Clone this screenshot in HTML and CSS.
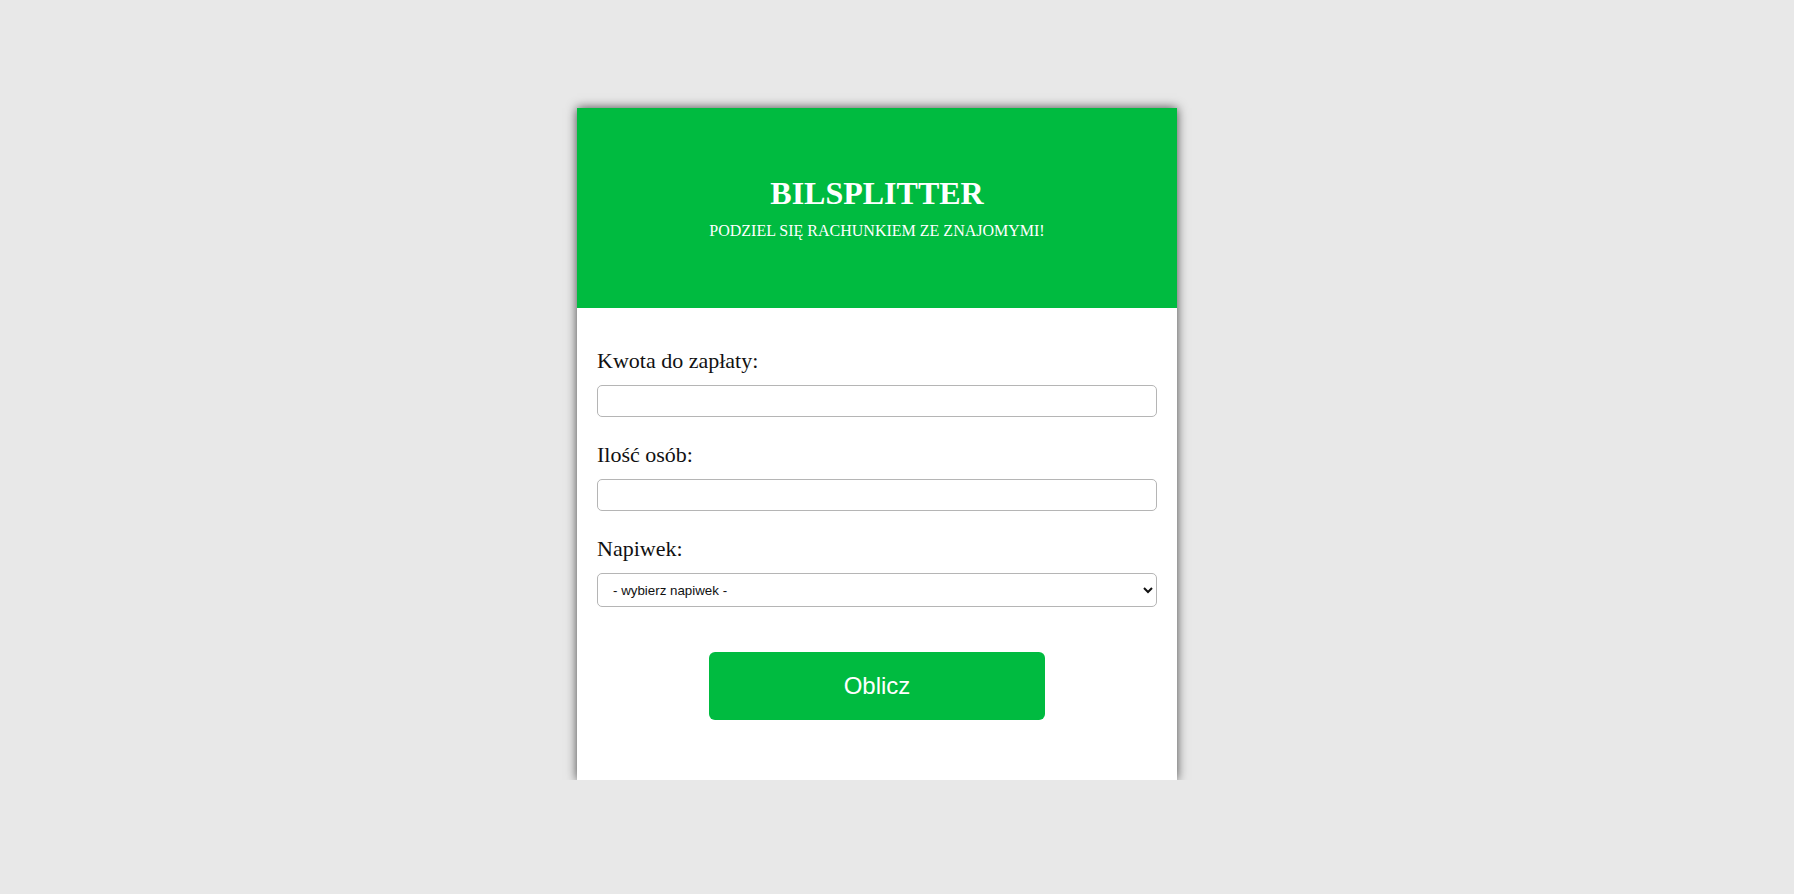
FILE: index.html
```html
<!DOCTYPE html>
<html lang="pl">
<head>
<meta charset="utf-8">
<title>Bilsplitter</title>
<link rel="stylesheet" href="styles.css">
</head>
<body>
<div class="page">
  <div class="card">
    <header class="card-header">
      <h1 class="title">BILSPLITTER</h1>
      <p class="subtitle">Podziel się rachunkiem ze znajomymi!</p>
    </header>
    <form class="card-body">
      <div class="field">
        <label class="label" for="kwota">Kwota do zapłaty:</label>
        <input class="input" id="kwota" type="text">
      </div>
      <div class="field">
        <label class="label" for="osoby">Ilość osób:</label>
        <input class="input" id="osoby" type="text">
      </div>
      <div class="field">
        <label class="label" for="napiwek">Napiwek:</label>
        <select class="select" id="napiwek">
          <option>- wybierz napiwek -</option>
        </select>
      </div>
      <button class="button" type="button">Oblicz</button>
    </form>
  </div>
</div>
</body>
</html>
```
FILE: styles.css
```css
html, body {
  margin: 0;
  padding: 0;
  background: #e8e8e8;
}
body {
  font-family: "Liberation Serif", "Times New Roman", serif;
}
.page {
  display: flex;
  justify-content: center;
  padding: 108px 40px 0 0;
}
.card {
  width: 600px;
  background: #ffffff;
  box-shadow: 0 0 10px rgba(0, 0, 0, 0.7);
}
.card-header {
  box-sizing: border-box;
  height: 200px;
  padding-bottom: 2px;
  background: #00bb40;
  color: #ffffff;
  display: flex;
  flex-direction: column;
  align-items: center;
  justify-content: center;
}
.title {
  margin: 0;
  font-size: 32px;
  font-weight: bold;
}
.subtitle {
  margin: 10px 0 0;
  font-size: 16px;
  text-transform: uppercase;
}
.card-body {
  display: flex;
  flex-direction: column;
  gap: 25px;
  padding: 40px 20px;
}
.field {
  display: flex;
  flex-direction: column;
}
.label {
  font-size: 22px;
  color: #111;
  margin-bottom: 11px;
}
.input {
  box-sizing: border-box;
  height: 32px;
  width: 100%;
  border: 1px solid #b5b5b5;
  border-radius: 5px;
  background: #fff;
  padding: 0 10px;
}
.select {
  box-sizing: border-box;
  height: 34px;
  width: 100%;
  border: 1px solid #b5b5b5;
  border-radius: 5px;
  background: #fff;
  padding: 0 11px;
  font-family: "Liberation Sans", Arial, sans-serif;
  font-size: 13.33px;
  color: #111;
}
.button {
  align-self: center;
  width: 336px;
  height: 68px;
  margin: 20px 0;
  border: none;
  border-radius: 6px;
  background: #00bb40;
  color: #ffffff;
  font-family: "Liberation Sans", Arial, sans-serif;
  font-size: 24px;
  cursor: pointer;
}
```
